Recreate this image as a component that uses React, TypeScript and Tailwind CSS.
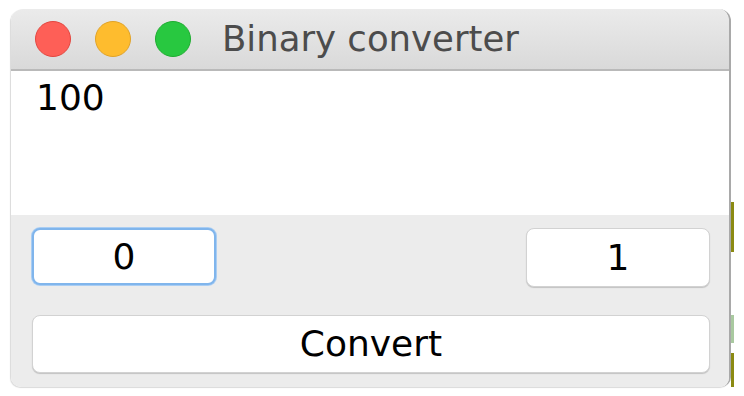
import React, { useState } from "react";

const font = { fontFamily: '"DejaVu Sans", Verdana, sans-serif' };

const TrafficLight = ({ color, ring }: { color: string; ring: string }) => (
  <div className={`w-[36px] h-[36px] rounded-full border ${color} ${ring}`} />
);

const App = () => {
  const [value] = useState("100");

  return (
    <div className="w-[744px] h-[396px] bg-white overflow-hidden" style={font}>
      <div className="flex pt-[9px] pl-[11px]">
        {/* window */}
        <div className="w-[720px] h-[378px] flex flex-col rounded-t-[12px] rounded-b-[10px] overflow-hidden border-r-2 border-[#a9a9a9] shadow-[-1px_1px_1px_rgba(0,0,0,0.15)]">
          {/* title bar */}
          <div className="h-[62px] shrink-0 flex items-center pl-[24px] gap-[24px] bg-gradient-to-b from-[#ebebeb] to-[#d9d9d9] border-b-2 border-[#b9b9b9]">
            <TrafficLight color="bg-[#fe5f57]" ring="border-[#e2463f]" />
            <TrafficLight color="bg-[#febc2e]" ring="border-[#e0a227]" />
            <TrafficLight color="bg-[#28c840]" ring="border-[#1fac31]" />
            <span className="ml-[7px] text-[35.5px] leading-none text-[#4c4c4c] pb-[1px]">
              Binary converter
            </span>
          </div>

          {/* output area */}
          <div className="h-[144px] shrink-0 bg-white pl-[25px] pt-[5px]">
            <span className="text-[36px] leading-[44px] text-black">{value}</span>
          </div>

          {/* controls */}
          <div className="flex-1 bg-[#ececec] pl-[21px] pr-[19px] pt-[13px] flex flex-col gap-[28px]">
            <div className="flex justify-between">
              <button className="w-[184px] h-[57px] rounded-[8px] bg-white border-2 border-[#80b5ec] shadow-[0_0_0_1px_#a9cdf3] text-[36px] leading-none text-black">
                0
              </button>
              <button className="w-[184px] h-[59px] rounded-[8px] bg-white border border-[#d2d2d2] shadow-[0_1px_1px_rgba(0,0,0,0.18)] text-[36px] leading-none text-black">
                1
              </button>
            </div>
            <button className="w-full h-[58px] rounded-[8px] bg-white border border-[#d2d2d2] shadow-[0_1px_1px_rgba(0,0,0,0.18)] text-[36px] leading-none text-black">
              Convert
            </button>
          </div>
        </div>

        {/* things behind the window */}
        <div className="w-[3px] flex flex-col pt-[193px]">
          <div className="h-[50px] bg-[#8b8a12]" />
          <div className="h-[63px]" />
          <div className="h-[28px] bg-[#a9c9a0]" />
          <div className="h-[10px]" />
          <div className="h-[34px] bg-[#8b8a12]" />
        </div>
      </div>
    </div>
  );
};

export default App;
